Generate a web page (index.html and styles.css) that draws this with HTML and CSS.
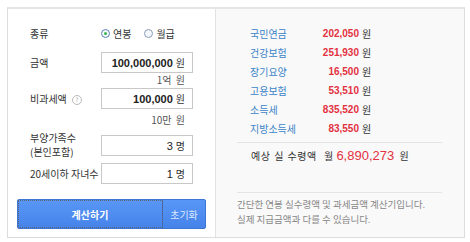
FILE: index.html
```html
<!DOCTYPE html>
<html>
  <head>
    <title>연봉 계산기</title>
    <link rel="stylesheet" href="styles.css">
  </head>
  <body>
    <div class="calc">
      <div class="form">
        <div class="row row-type">
          <div class="label">종류</div>
          <div class="field radios">
            <span class="radio checked"></span><span class="radio-text">연봉</span>
            <span class="radio"></span><span class="radio-text">월급</span>
          </div>
        </div>
        <div class="row row-amount">
          <div class="label">금액</div>
          <div class="field box"><span class="num">100,000,000</span><span class="unit">원</span></div>
        </div>
        <div class="hint">1억 원</div>
        <div class="row row-tax">
          <div class="label">비과세액 <span class="help">?</span></div>
          <div class="field box"><span class="num">100,000</span><span class="unit">원</span></div>
        </div>
        <div class="hint hint-tax">10만 원</div>
        <div class="row row-family">
          <div class="label label-two">
            <div>부양가족수</div>
            <div>(본인포함)</div>
          </div>
          <div class="field box"><span class="num-plain">3</span><span class="unit">명</span></div>
        </div>
        <div class="row row-kids">
          <div class="label">20세이하 자녀수</div>
          <div class="field box"><span class="num-plain">1</span><span class="unit">명</span></div>
        </div>
        <div class="buttons">
          <button class="calculate-button">계산하기</button>
          <button class="reset-button">초기화</button>
        </div>
      </div>

      <div class="summary">
        <div class="deductions">
          <div class="item"><span class="name">국민연금</span><span class="val">202,050</span><span class="unit">원</span></div>
          <div class="item"><span class="name">건강보험</span><span class="val">251,930</span><span class="unit">원</span></div>
          <div class="item"><span class="name">장기요양</span><span class="val">16,500</span><span class="unit">원</span></div>
          <div class="item"><span class="name">고용보험</span><span class="val">53,510</span><span class="unit">원</span></div>
          <div class="item"><span class="name">소득세</span><span class="val">835,520</span><span class="unit">원</span></div>
          <div class="item"><span class="name">지방소득세</span><span class="val">83,550</span><span class="unit">원</span></div>
        </div>
        <div class="total">
          <span class="total-label">예상 실 수령액</span>
          <span class="month">월</span>
          <span class="total-val">6,890,273</span>
          <span class="unit">원</span>
        </div>
        <div class="notes">
          간단한 연봉 실수령액 및 과세금액 계산기입니다.<br>
          실제 지급금액과 다를 수 있습니다.
        </div>
      </div>
    </div>
  </body>
</html>
```

FILE: styles.css
```css
body {
  margin: 0;
  padding: 0;
  background-color: #fff;
  font-family: "Noto Sans CJK KR", sans-serif;
  font-size: 10px;
  color: #333;
}
.calc {
  display: flex;
  width: 458px;
  height: 231px;
  margin: 7px;
  box-sizing: border-box;
  border: 1px solid #dcdcdc;
  border-top: 2px solid #e6e6e6;
}
.form {
  width: 207px;
  padding: 14px 0 0 22px;
  box-sizing: border-box;
  background-color: #fff;
}
.row {
  display: flex;
  align-items: center;
}
.label {
  width: 71px;
  white-space: nowrap;
}
.label-two {
  line-height: 14px;
}
.field {
  width: 92px;
}
.row-type {
  height: 20px;
}
.row-amount {
  margin-top: 9px;
}
.row-tax {
  margin-top: 2px;
}
.row-family {
  margin-top: 5px;
}
.row-kids {
  margin-top: 4px;
}
.radios {
  display: flex;
  align-items: center;
}
.radio {
  width: 9px;
  height: 9px;
  box-sizing: border-box;
  border: 1px solid #8a9bb5;
  border-radius: 50%;
  background: #f4f7fb;
  position: relative;
}
.radio.checked {
  border-color: #5b80b8;
}
.radio.checked:after {
  content: "";
  position: absolute;
  left: 2px;
  top: 2px;
  width: 3px;
  height: 3px;
  border-radius: 50%;
  background: #3bb24a;
}
.radio-text {
  margin-left: 3px;
  margin-right: 13px;
}
.box {
  height: 21px;
  box-sizing: border-box;
  border: 1px solid #c8c8c8;
  background: #fff;
  text-align: right;
  padding-right: 7px;
  line-height: 19px;
}
.num {
  font-family: "Liberation Sans", sans-serif;
  font-weight: bold;
  font-size: 11px;
  color: #222;
}
.num-plain {
  font-family: "Liberation Sans", sans-serif;
  font-size: 11px;
  color: #222;
}
.unit {
  margin-left: 3px;
  color: #333;
}
.help {
  display: inline-block;
  width: 8px;
  height: 8px;
  margin-left: 3px;
  border: 1px solid #bbb;
  border-radius: 50%;
  font-size: 6px;
  line-height: 8px;
  text-align: center;
  color: #999;
  vertical-align: 1px;
}
.hint {
  width: 163px;
  height: 12px;
  margin-top: 1px;
  line-height: 12px;
  padding-right: 8px;
  box-sizing: border-box;
  text-align: right;
  color: #555;
  word-spacing: 2px;
}
.hint-tax {
  margin-top: 5px;
}
.buttons {
  display: flex;
  width: 189px;
  height: 30px;
  margin: 15px 0 0 -13px;
  border: 1px solid #3e76d2;
  border-radius: 2px;
  box-sizing: border-box;
  background: linear-gradient(#5897f6, #4683ea);
  overflow: hidden;
}
.buttons button {
  border: none;
  background: transparent;
  font-family: "Noto Sans CJK KR", sans-serif;
  font-size: 10px;
  cursor: pointer;
  padding: 0;
}
.calculate-button {
  width: 145px;
  color: #fff;
  font-weight: bold;
  outline: 1px dotted #5a6478;
  outline-offset: -1px;
  border-right: 1px solid #3c70c8 !important;
}
.reset-button {
  flex: 1;
  color: #dfeaff;
}
.summary {
  flex: 1;
  padding: 15px 22px 0 21px;
  background-color: #f9f9f9;
  border-left: 1px solid #e2e2e2;
}
.deductions {
  padding-left: 13px;
}
.item {
  display: flex;
  height: 19px;
  line-height: 19px;
}
.name {
  width: 70px;
  color: #3b84c8;
}
.val {
  width: 39px;
  text-align: right;
  font-family: "Liberation Sans", sans-serif;
  font-weight: bold;
  color: #e3313f;
}
.total {
  margin-top: 4px;
  height: 50px;
  box-sizing: border-box;
  border-top: 1px solid #e4e4e4;
  padding: 5px 0 0 14px;
  line-height: 16px;
  color: #333;
}
.total-label {
  word-spacing: 1px;
  letter-spacing: 0.5px;
}
.month {
  margin-left: 5px;
}
.total-val {
  margin-left: 1px;
  font-family: "Liberation Sans", sans-serif;
  font-size: 13px;
  color: #e3313f;
}
.notes {
  border-top: 1px solid #e4e4e4;
  padding-top: 4px;
  line-height: 15px;
  font-size: 9.5px;
  color: #888;
}
```
